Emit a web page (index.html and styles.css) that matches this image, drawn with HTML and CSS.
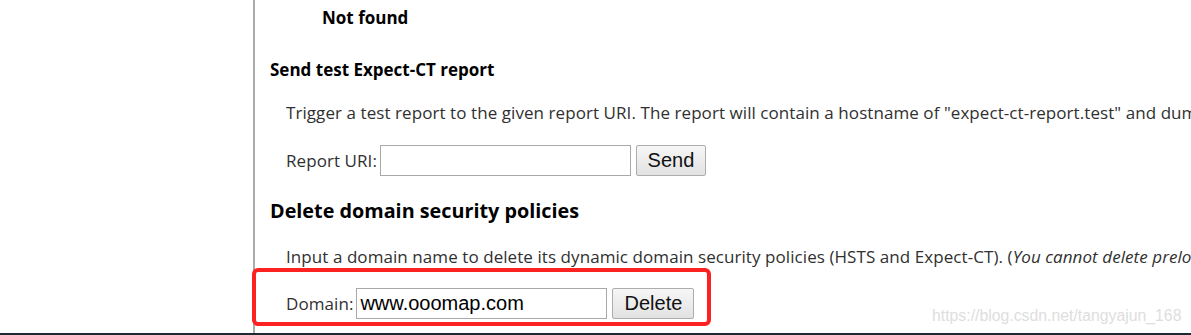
FILE: index.html
```html
<!DOCTYPE html>
<html lang="en">
<head>
    <meta charset="UTF-8">
    <title>HSTS / Expect-CT</title>
    <link rel="stylesheet" href="styles.css">
</head>
<body>
    <div class="page">
        <!-- left nav column (empty in this view) -->
        <div class="sidebar"></div>

        <div class="content">
            <div class="result">Not found</div>

            <h4>Send test Expect-CT report</h4>
            <p>Trigger a test report to the given report URI. The report will contain a hostname of "expect-ct-report.test" and dummy certificates.</p>
            <div class="form-row">
                <label for="report-uri">Report URI:</label>
                <input type="text" id="report-uri">
                <button type="button">Send</button>
            </div>

            <h3>Delete domain security policies</h3>
            <p>Input a domain name to delete its dynamic domain security policies (HSTS and Expect-CT). (<i>You cannot delete preloaded entries.</i>)</p>

            <!-- red annotation box around the delete form -->
            <div class="highlight">
                <div class="form-row">
                    <label for="delete-domain">Domain:</label>
                    <input type="text" id="delete-domain" value="www.ooomap.com">
                    <button type="button" class="btn-delete">Delete</button>
                </div>
            </div>
        </div>
    </div>
    <div class="taskbar"></div>

    <div class="watermark">https://blog.csdn.net/tangyajun_168</div>
</body>
</html>
```

FILE: styles.css
```css
/* base */
body {
    margin: 0;
    height: 335px;
    overflow: hidden;
    font-family: "Open Sans", "Noto Sans", sans-serif;
    font-size: 17px;
    letter-spacing: 0.07px;
    color: #303030;
    background: #fff;
    position: relative;
}

.page {
    display: flex;
    height: 333px;
}

.sidebar {
    width: 253px;
    flex: none;
    border-right: 2px solid #ababab;
}

.content {
    flex: 1;
    min-width: 0;
    padding-left: 15px;
    white-space: nowrap;
}

.result {
    margin: 6px 0 0 52px;
    line-height: 24px;
    font-size: 17px;
    letter-spacing: 0;
    font-weight: bold;
    color: #000;
}

h4 {
    margin: 28px 0 0;
    line-height: 24px;
    font-size: 17px;
    letter-spacing: 0;
    font-weight: bold;
    color: #000;
}

h3 {
    margin: 21px 0 0;
    line-height: 28px;
    font-size: 19.8px;
    letter-spacing: 0;
    font-weight: bold;
    color: #000;
}

/* long lines run off the window, as in the screenshot */
p {
    margin: 19px 0 0 16px;
    line-height: 24px;
    overflow: hidden;
}

h3 + p {
    margin-top: 20px;
}

/* form rows */
.form-row {
    display: flex;
    align-items: center;
    margin: 20px 0 0 16px;
}

.form-row label {
    line-height: 24px;
    margin-right: 3px;
}

.form-row input {
    width: 243px;
    height: 29px;
    margin: 0;
    padding: 0 3px;
    border: 1px solid #a9a9a9;
    font-family: "Liberation Sans", Arial, sans-serif;
    font-size: 20px;
    letter-spacing: 0;
    color: #000;
}

.form-row button {
    height: 31px;
    width: 70px;
    margin-left: 5px;
    padding: 0;
    border: 1px solid #adadad;
    border-radius: 2px;
    background: linear-gradient(#f6f6f6, #e2e2e2);
    font-family: "Liberation Sans", Arial, sans-serif;
    font-size: 20px;
    letter-spacing: 0;
    color: #111;
}

.form-row .btn-delete {
    width: 82px;
}

.highlight {
    position: relative;
    margin: -1px 0 0 -18px;
    width: 451px;
    height: 50px;
    border: 4px solid #fc2222;
    border-radius: 6px;
}

.highlight .form-row {
    margin: 16px 0 0 30px;
}

.taskbar {
    height: 2px;
    background: #1d2a31;
}

.watermark {
    position: absolute;
    left: 932px;
    top: 307px;
    font-family: "Liberation Sans", Arial, sans-serif;
    font-size: 15.8px;
    letter-spacing: 0;
    color: #dedede;
}
```
